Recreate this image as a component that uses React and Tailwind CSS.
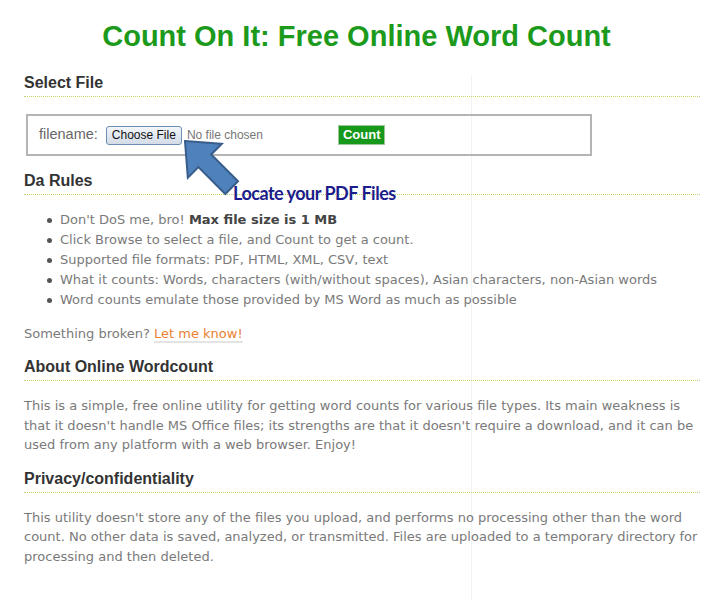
import React from 'react';

// Count On It — single-page word count form, with the "locate" callout drawn over it.

const RULES = [
  { text: "Don't DoS me, bro! ", bold: 'Max file size is 1 MB' },
  { text: 'Click Browse to select a file, and Count to get a count.' },
  { text: 'Supported file formats: PDF, HTML, XML, CSV, text' },
  { text: 'What it counts: Words, characters (with/without spaces), Asian characters, non-Asian words' },
  { text: 'Word counts emulate those provided by MS Word as much as possible' },
];

const BODY = { fontFamily: '"DejaVu Sans", Verdana, sans-serif' };
const ARIAL = { fontFamily: '"Liberation Sans", Arial, sans-serif' };

function Heading({ children, className = '' }) {
  return (
    <h2
      style={ARIAL}
      className={`text-[16px] leading-[20px] font-bold text-[#333] pb-[3px] border-b border-dotted border-[#bfd671] ${className}`}
    >
      {children}
    </h2>
  );
}

function Arrow() {
  return (
    <svg className="absolute left-[170px] top-[126px] pointer-events-none" width="90" height="90" viewBox="0 0 90 90">
      <g transform="translate(15 15) rotate(45)">
        <path
          d="M0 0 L28 -24 L28 -9 L66 -9 L66 9 L28 9 L28 24 Z"
          fill="#4f81bd"
          stroke="#385d8a"
          strokeWidth="2"
          strokeLinejoin="miter"
        />
      </g>
    </svg>
  );
}

export default function App() {
  return (
    <div className="relative w-[713px] h-[600px] bg-white overflow-hidden">
      {/* faint column edge */}
      <div className="absolute left-[471px] top-[75px] bottom-0 w-px bg-[#f2f2f2]" />

      <h1
        style={ARIAL}
        className="pt-[19px] text-center text-[29px] leading-[34px] font-bold text-[#1c9a1c]"
      >
        Count On It: Free Online Word Count
      </h1>

      <div className="relative pl-6 pr-[13px]">
        <Heading className="mt-[20px]">Select File</Heading>

        <div className="mt-[17px] ml-[2px] w-[566px] h-[42px] border-2 border-[#b4b4b4] flex items-center pl-[11px]" style={ARIAL}>
          <span className="text-[14.5px] text-[#666]">filename:</span>
          <button className="ml-[8px] h-[19px] px-[5px] text-[12px] leading-[15px] text-[#111] rounded-[3px] border border-[#6d8fb5] bg-gradient-to-b from-[#f3f6fa] to-[#d3dce8]">
            Choose File
          </button>
          <span className="ml-[5px] text-[12px] text-[#777]">No file chosen</span>
          <button className="ml-[75px] h-[20px] px-[4px] text-[13px] leading-[16px] font-bold text-white bg-[#16991a] border border-[#9bc79b]">
            Count
          </button>
        </div>

        <Heading className="mt-[15px]">Da Rules</Heading>

        <ul className="mt-[15px] text-[13px] leading-[20px] text-[#7a7a7a]" style={BODY}>
          {RULES.map((r) => (
            <li key={r.text} className="flex items-center">
              <span className="ml-[23px] mr-[8px] w-[5px] h-[5px] rounded-full bg-[#555]" />
              <span className="whitespace-nowrap">
                {r.text}
                {r.bold && <b className="text-[#444]">{r.bold}</b>}
              </span>
            </li>
          ))}
        </ul>

        <p className="mt-[14px] text-[13px] leading-[20px] text-[#7a7a7a]" style={BODY}>
          Something broken?{' '}
          <a className="text-[#ea8030] border-b-2 border-[#e4e4e4]">Let me know!</a>
        </p>

        <Heading className="mt-[13px]">About Online Wordcount</Heading>

        <p className="mt-[15px] text-[13px] leading-[19.5px] text-[#7a7a7a] whitespace-nowrap" style={BODY}>
          This is a simple, free online utility for getting word counts for various file types. Its main weakness is
          <br />
          that it doesn't handle MS Office files; its strengths are that it doesn't require a download, and it can be
          <br />
          used from any platform with a web browser. Enjoy!
        </p>

        <Heading className="mt-[14px]">Privacy/confidentiality</Heading>

        <p className="mt-[15px] text-[13px] leading-[19.5px] text-[#7a7a7a] whitespace-nowrap" style={BODY}>
          This utility doesn't store any of the files you upload, and performs no processing other than the word
          <br />
          count. No other data is saved, analyzed, or transmitted. Files are uploaded to a temporary directory for
          <br />
          processing and then deleted.
        </p>
      </div>

      <Arrow />
      <div
        className="absolute left-[233px] top-[182px] text-[18px] leading-[22px] font-bold tracking-[-0.5px] text-[#1c1c8c]"
        style={{ fontFamily: 'Lato, "Open Sans", sans-serif' }}
      >
        Locate your PDF Files
      </div>
    </div>
  );
}
